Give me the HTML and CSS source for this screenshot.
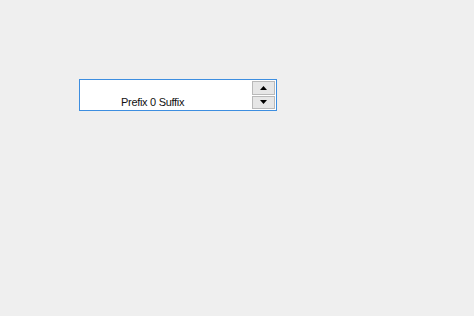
FILE: index.html
```html
<!DOCTYPE html>
<html lang="en">
<head>
    <meta charset="UTF-8">
    <title>Spin box</title>
    <link rel="stylesheet" href="styles.css">
</head>
<body>
    <div class="spinbox">
        <div class="spin-text">Prefix 0 Suffix</div>
        <div class="spin-buttons">
            <div class="spin-btn">
                <svg width="7" height="4" viewBox="0 0 7 4"><path d="M3.5 0L7 4H0z" fill="#000"/></svg>
            </div>
            <div class="spin-btn">
                <svg width="7" height="4" viewBox="0 0 7 4"><path d="M0 0H7L3.5 4z" fill="#000"/></svg>
            </div>
        </div>
    </div>
</body>
</html>
```

FILE: styles.css
```css
body {
    margin: 0;
    width: 474px;
    height: 316px;
    background: #efefef;
    font-family: 'Liberation Sans', Arial, sans-serif;
    font-size: 11px;
    color: #000;
    padding: 79px 0 0 79px;
    box-sizing: border-box;
}
.spinbox {
    display: flex;
    width: 198px;
    height: 32px;
    box-sizing: border-box;
    border: 1px solid #3d8ee0;
    background: #fff;
}
.spin-text {
    flex: 1;
    display: flex;
    align-items: flex-end;
    padding: 0 0 2px 41px;
    letter-spacing: -0.3px;
    color: #111;
}
.spin-buttons {
    display: flex;
    flex-direction: column;
    width: 23px;
    margin: 1px 1px 1px 0;
    gap: 1px;
}
.spin-btn {
    flex: 1;
    display: flex;
    align-items: center;
    justify-content: center;
    background: #e6e6e6;
    border: 1px solid #b9b9b9;
}
```
